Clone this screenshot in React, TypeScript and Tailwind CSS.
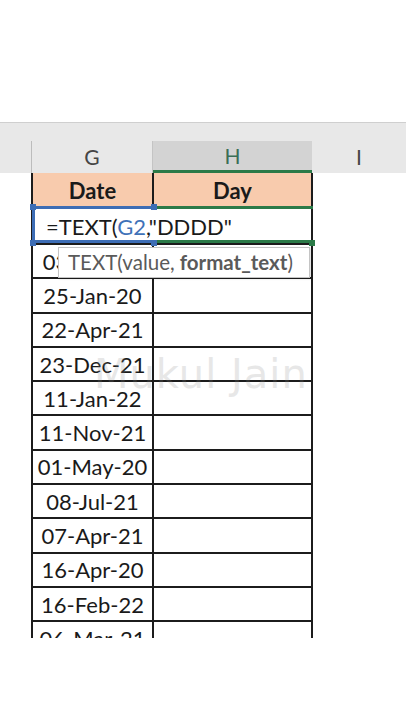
import React from "react";

const dates = [
  "25-Jan-20",
  "22-Apr-21",
  "23-Dec-21",
  "11-Jan-22",
  "11-Nov-21",
  "01-May-20",
  "08-Jul-21",
  "07-Apr-21",
  "16-Apr-20",
  "16-Feb-22",
  "06-Mar-21",
];

const font = { fontFamily: "Lato, 'Open Sans', sans-serif" };

export default function App() {
  return (
    <div className="relative w-[406px] h-[720px] overflow-hidden bg-white" style={font}>
      <div className="h-[122px]" />
      {/* column header band */}
      <div className="h-[51px] border-t border-[#cfcfcf] bg-[#e8e8e8] flex flex-col">
        <div className="h-[18px]" />
        <div className="flex h-[32px] text-[21px] text-[#454545]">
          <div className="w-[32px] border-r border-[#bcbcbc]" />
          <div className="w-[121px] border-r border-[#c4c4c4] flex items-center justify-center">G</div>
          <div className="w-[159px] bg-[#d3d3d3] border-b-[3px] border-[#2b7a48] flex items-center justify-center text-[#3a6e56]">
            H
          </div>
          <div className="flex-1 flex items-center justify-center">I</div>
        </div>
      </div>
      {/* grid */}
      <div className="flex h-[465px] overflow-hidden">
        <div className="w-[31px]" />
        <div className="flex flex-col border-l-2 border-[#1c1c1c] h-fit">
          <div className="flex h-[34px] bg-[#f8cbad] text-[22px] font-bold text-[#1a1a1a]">
            <div className="w-[121px] border-r-2 border-[#1c1c1c] flex items-center justify-center">Date</div>
            <div className="w-[159px] border-r-2 border-[#1c1c1c] flex items-center justify-center">Day</div>
          </div>
          <div className="flex h-[36px] text-[22px] text-[#1a1a1a]">
            <div className="w-[280px] border-r-2 border-[#1c1c1c] flex items-center pl-[13px] pt-[3px] whitespace-nowrap">
              <span className="bg-white pr-1">
                =TEXT(<span className="text-[#3f72b8]">G2</span>,"DDDD"
              </span>
            </div>
          </div>
          {["03-Jun-20", ...dates].map((d) => (
            <div key={d} className="flex h-[34.3px] text-[22px] text-[#1a1a1a] border-t-2 border-[#1c1c1c]">
              <div className="w-[121px] border-r-2 border-[#1c1c1c] flex items-center justify-center">
                {d}
              </div>
              <div className="w-[159px] border-r-2 border-[#1c1c1c]" />
            </div>
          ))}
        </div>
      </div>

      {/* selection overlays */}
      <div className="absolute left-[32px] top-[206px] w-[122px] h-[37px] border-[3px] border-[#3d6db5] border-r-0" />
      <div className="absolute left-[155px] top-[206px] w-[158px] h-[37px] border-y-[3px] border-[#2b7a48]" />
      <div className="absolute left-[30px] top-[204px] w-[6px] h-[6px] bg-[#3d6db5]" />
      <div className="absolute left-[151px] top-[204px] w-[6px] h-[6px] bg-[#3d6db5]" />
      <div className="absolute left-[30px] top-[240px] w-[6px] h-[6px] bg-[#3d6db5]" />
      <div className="absolute left-[151px] top-[240px] w-[6px] h-[6px] bg-[#3d6db5]" />
      <div className="absolute left-[309px] top-[240px] w-[6px] h-[6px] bg-[#2b7a48]" />

      {/* tooltip */}
      <div className="absolute left-[58px] top-[247px] w-[252px] h-[31px] bg-white border border-[#c4c4c4] shadow-[1px_1px_2px_rgba(0,0,0,0.15)] flex items-center pl-[9px] text-[20.5px] text-[#5a5a5a] whitespace-nowrap">
        TEXT(value, <span className="font-bold ml-[5px]">format_text</span>)
      </div>

      {/* watermark */}
      <div className="absolute left-[94px] top-[344px] text-[40px] tracking-[1px] text-[#8a8a8a] opacity-20 whitespace-nowrap" style={{ fontFamily: "'DejaVu Sans', sans-serif" }}>
        Mukul Jain
      </div>
    </div>
  );
}
